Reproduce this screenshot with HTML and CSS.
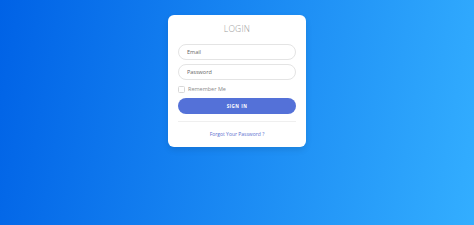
FILE: index.html
```html
<!DOCTYPE html>
<html>
<head>
<meta charset="utf-8">
<link rel="stylesheet" href="styles.css">
</head>
<body>
<div class="card">
  <h1 class="title">LOGIN</h1>
  <form class="form">
    <input class="field" type="text" placeholder="Email">
    <input class="field" type="password" placeholder="Password">
    <label class="remember"><span class="box"></span>Remember Me</label>
    <button class="btn" type="button">SIGN IN</button>
    <div class="rule"></div>
    <a class="forgot" href="#">Forgot Your Password ?</a>
  </form>
</div>
</body>
</html>
```
FILE: styles.css
```css
html, body {
  margin: 0;
  padding: 0;
  height: 100%;
}
body {
  background: linear-gradient(100deg, #0062e6 0%, #33aeff 100%);
  font-family: "Open Sans", "Liberation Sans", sans-serif;
  display: flex;
  justify-content: center;
  align-items: flex-start;
}
.card {
  margin-top: 15px;
  width: 138px;
  height: 132px;
  box-sizing: border-box;
  background: #fff;
  border-radius: 6px;
  box-shadow: 0 3px 6px rgba(0, 0, 0, 0.1);
  padding: 8px 10px 0 10px;
}
.title {
  margin: 0;
  text-align: center;
  font-size: 8.5px;
  line-height: 12px;
  font-weight: 300;
  color: #9a9a9a;
  letter-spacing: 0.2px;
}
.form {
  margin-top: 9px;
  display: flex;
  flex-direction: column;
}
.field {
  height: 16px;
  box-sizing: border-box;
  border: 1px solid #e4e4e4;
  border-radius: 8px;
  padding: 0 0 0 8px;
  margin: 0 0 4px 0;
  font-family: inherit;
  font-size: 5.5px;
  color: #555;
  outline: none;
}
.field::placeholder {
  color: #666;
}
.remember {
  display: flex;
  align-items: center;
  height: 8px;
  margin-top: 1px;
  font-size: 5.5px;
  color: #8c8c8c;
}
.box {
  width: 5px;
  height: 5px;
  border: 1px solid #d8d8d8;
  border-radius: 1.5px;
  margin-right: 3px;
}
.btn {
  margin-top: 5px;
  height: 16px;
  border: none;
  border-radius: 8px;
  background: #5471d8;
  color: #fff;
  font-family: inherit;
  font-size: 4.5px;
  font-weight: 700;
  letter-spacing: 0.5px;
  padding: 0;
}
.rule {
  margin-top: 7px;
  height: 1px;
  background: #efefef;
}
.forgot {
  margin-top: 8px;
  text-align: center;
  font-size: 5px;
  line-height: 8px;
  color: #5b6fcf;
  text-decoration: none;
}
```
